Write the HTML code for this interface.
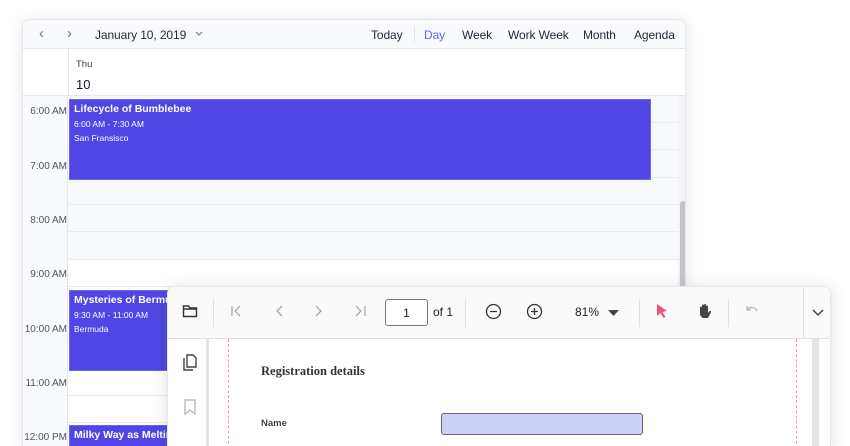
<!DOCTYPE html>
<html><head><meta charset="utf-8"><style>
*{box-sizing:border-box;margin:0;padding:0}
html,body{width:850px;height:446px;overflow:hidden}
body{background:#fff;font-family:"Liberation Sans",sans-serif;position:relative}
.cal{position:absolute;left:22px;top:19px;width:664px;height:427px;border-radius:8px 8px 0 0;background:#fff;box-shadow:0 2px 14px rgba(60,60,100,.14);overflow:hidden;border:1px solid #e5e7eb;border-bottom:none}
.tb{position:absolute;left:0;top:0;width:100%;height:29px;background:#f9fafb;border-bottom:1px solid #e5e7eb;font-size:12px;color:#1f2937}
.tb span{position:absolute;top:8px;letter-spacing:-.1px}
.hdr{position:absolute;top:29px;left:0;width:100%;height:47px;background:#fff;border-bottom:1px solid #e5e7eb}
.gut{position:absolute;left:0;top:76px;width:45px;height:360px;background:#f9fafb;border-right:1px solid #e5e7eb}
.t{position:absolute;left:0;width:44px;text-align:right;font-size:10px;color:#4b5563}
.row{position:absolute;left:45px;width:610px;height:27px;border-bottom:1px solid #e9ebef}
.ev{position:absolute;left:46px;background:#4f46e5;color:#fff;padding:3px 4px;border:1px solid #6e67ee}
.ev b{font-size:10.5px;font-weight:bold;display:block;white-space:nowrap}
.ev i{font-style:normal;font-size:8.5px;display:block;margin-top:4px}
.pdf{position:absolute;left:167px;top:286px;width:664px;height:160px;background:#fff;border-radius:8px 8px 0 0;box-shadow:0 2px 16px rgba(60,60,100,.18);overflow:hidden;border:1px solid #e5e7eb;border-bottom:none}
.ptb{position:absolute;left:0;top:0;width:100%;height:52px;background:#fafafa;border-bottom:1px solid #e0e0e0}
.ic{position:absolute;top:16px}
.sep{position:absolute;top:12px;width:1px;height:28px;background:#e0e0e0}
</style></head><body>
<div class="cal">
 <div class="tb">
  <span style="left:16px;color:#6b7280;top:5px;font-size:15px">‹</span>
  <span style="left:44px;color:#6b7280;top:5px;font-size:15px">›</span>
  <span style="left:72px;font-size:12px">January 10, 2019</span>
  <svg style="position:absolute;left:172px;top:11px" width="8" height="6"><path d="M1 1l3 3 3-3" stroke="#6b7280" fill="none"/></svg>
  <span style="left:348px">Today</span>
  <div style="position:absolute;left:391px;top:6px;width:1px;height:17px;background:#e5e7eb"></div>
  <span style="left:401px;color:#6366f1">Day</span>
  <span style="left:439px">Week</span>
  <span style="left:485px">Work Week</span>
  <span style="left:560px">Month</span>
  <span style="left:611px">Agenda</span>
 </div>
 <div class="hdr">
  <div style="position:absolute;left:45px;top:0;width:1px;height:47px;background:#e5e7eb"></div>
  <div style="position:absolute;left:53px;top:10px;font-size:9.5px;color:#374151">Thu</div>
  <div style="position:absolute;left:53px;top:28px;font-size:13px;color:#111827">10</div>
 </div>
 <div class="gut"></div>
 <div style="position:absolute;left:45px;top:76px;width:610px;height:164px;background:#f8f9fb"></div>
 <div class="row" style="top:76px"></div><div class="row" style="top:103px"></div>
 <div class="row" style="top:131px"></div><div class="row" style="top:158px"></div>
 <div class="row" style="top:185px"></div><div class="row" style="top:213px"></div>
 <div class="row" style="top:240px"></div><div class="row" style="top:267px"></div>
 <div class="row" style="top:294px"></div><div class="row" style="top:322px"></div>
 <div class="row" style="top:349px"></div><div class="row" style="top:376px"></div>
 <div class="row" style="top:403px"></div>
 <div class="t" style="top:86px">6:00 AM</div>
 <div class="t" style="top:141px">7:00 AM</div>
 <div class="t" style="top:195px">8:00 AM</div>
 <div class="t" style="top:249px">9:00 AM</div>
 <div class="t" style="top:304px">10:00 AM</div>
 <div class="t" style="top:358px">11:00 AM</div>
 <div class="t" style="top:412px">12:00 PM</div>
 <div class="ev" style="top:79px;width:582px;height:81px"><b>Lifecycle of Bumblebee</b><i>6:00 AM - 7:30 AM</i><i>San Fransisco</i></div>
 <div class="ev" style="top:270px;width:120px;height:81px"><b>Mysteries of Bermuda</b><i>9:30 AM - 11:00 AM</i><i>Bermuda</i></div>
 <div class="ev" style="top:405px;width:120px;height:30px"><b>Milky Way as Melting</b></div>
 <div style="position:absolute;left:655px;top:76px;width:9px;height:360px;background:#f3f4f6"></div>
 <div style="position:absolute;left:657px;top:181px;width:6px;height:100px;background:#c4c4c8;border-radius:3px"></div>
</div>

<div class="pdf">
 <div class="ptb">
  <svg class="ic" style="left:14px" width="16" height="16" viewBox="0 0 16 16"><path d="M1.5 3h5l1.5 2h6.5v8.5h-13z M1.5 6h13" fill="none" stroke="#333" stroke-width="1.4"/></svg>
  <div class="sep" style="left:45px"></div>
  <svg class="ic" style="left:62px" width="14" height="16"><path d="M2 3v10 M10 3l-5 5 5 5" fill="none" stroke="#aaa" stroke-width="1.3"/></svg>
  <svg class="ic" style="left:104px" width="14" height="16"><path d="M10 3l-5 5 5 5" fill="none" stroke="#aaa" stroke-width="1.3"/></svg>
  <svg class="ic" style="left:144px" width="14" height="16"><path d="M4 3l5 5-5 5" fill="none" stroke="#aaa" stroke-width="1.3"/></svg>
  <svg class="ic" style="left:185px" width="14" height="16"><path d="M3 3l5 5-5 5 M12 3v10" fill="none" stroke="#aaa" stroke-width="1.3"/></svg>
  <div style="position:absolute;left:217px;top:12px;width:43px;height:27px;border:1px solid #777;border-radius:3px;font-size:12px;text-align:center;line-height:26px;color:#222;background:#fff">1</div>
  <div style="position:absolute;left:265px;top:18px;font-size:12px;color:#222">of 1</div>
  <div class="sep" style="left:297px"></div>
  <svg class="ic" style="left:317px" width="17" height="17"><circle cx="8.5" cy="8.5" r="7" fill="none" stroke="#333" stroke-width="1.3"/><path d="M5 8.5h7" stroke="#333" stroke-width="1.3"/></svg>
  <svg class="ic" style="left:358px" width="17" height="17"><circle cx="8.5" cy="8.5" r="7" fill="none" stroke="#333" stroke-width="1.3"/><path d="M5 8.5h7M8.5 5v7" stroke="#333" stroke-width="1.3"/></svg>
  <div style="position:absolute;left:407px;top:18px;font-size:12px;color:#222">81%</div>
  <svg style="position:absolute;left:440px;top:23px" width="11" height="6"><path d="M0 0h11l-5.5 6z" fill="#444"/></svg>
  <div class="sep" style="left:471px"></div>
  <svg class="ic" style="left:488px" width="12" height="16"><path d="M1 1l10 7-4.5 1 3 5-2 1-3-5-3.5 3z" fill="#f0557a"/></svg>
  <svg class="ic" style="left:529px" width="15" height="16"><path d="M3 9V4.5a1 1 0 012 0V8V2.5a1 1 0 012 0V8V2a1 1 0 012 0v6V3.5a1 1 0 012 0V10l1.5-2a1 1 0 011.5 1.2L11 15H5.5L3 12z" fill="#444"/></svg>
  <div class="sep" style="left:560px"></div>
  <svg class="ic" style="left:576px" width="16" height="14"><path d="M3 3v4h4 M3 7a5.5 5 0 0110 1" fill="none" stroke="#bbb" stroke-width="1.4"/></svg>
  <div style="position:absolute;left:635px;top:0;width:1px;height:52px;background:#e0e0e0"></div>
  <svg class="ic" style="left:644px;top:22px" width="12" height="8"><path d="M1 1l5 5 5-5" fill="none" stroke="#444" stroke-width="1.5"/></svg>
 </div>
 <div style="position:absolute;left:0;top:52px;width:41px;height:110px;background:#fff;border-right:3px solid #e4e4e4"></div>
 <svg style="position:absolute;left:14px;top:67px" width="16" height="18"><path d="M5 1h6l3 3v9H5z M2 4v12h9" fill="none" stroke="#444" stroke-width="1.4"/></svg>
 <svg style="position:absolute;left:15px;top:112px" width="14" height="16"><path d="M2 1h10v14l-5-4-5 4z" fill="none" stroke="#bbb" stroke-width="1.4"/></svg>
 <div style="position:absolute;left:44px;top:52px;width:600px;height:110px;background:#fff"></div>
 <div style="position:absolute;left:60px;top:52px;height:110px;border-left:1px dashed #f29a9a"></div>
 <div style="position:absolute;left:628px;top:52px;height:110px;border-left:1px dashed #f29a9a"></div>
 <div style="position:absolute;left:644px;top:52px;width:7px;height:110px;background:#e4e4e4"></div>
 <div style="position:absolute;left:93px;top:77px;font-family:'Liberation Serif',serif;font-weight:bold;font-size:12.5px;color:#333">Registration details</div>
 <div style="position:absolute;left:93px;top:131px;font-size:9.5px;font-weight:bold;color:#444">Name</div>
 <div style="position:absolute;left:273px;top:126px;width:202px;height:22px;background:#cbd0f5;border:1px solid #666;border-radius:3px"></div>
</div>
</body></html>
